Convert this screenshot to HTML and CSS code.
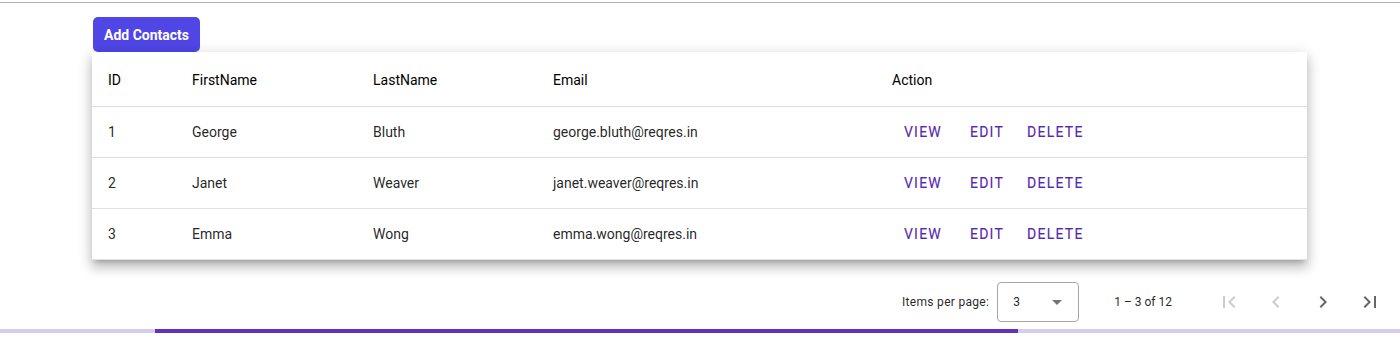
FILE: index.html
```html
<!DOCTYPE html>
<html lang="en">
<head>
    <meta charset="UTF-8">
    <meta name="viewport" content="width=device-width, initial-scale=1.0">
    <title>Contacts</title>
    <link rel="stylesheet" href="styles.css">
</head>
<body>
    <!-- Toolbar edge -->
    <div class="top-line"></div>

    <div class="page">
        <button class="add-btn">Add Contacts</button>

        <div class="table-card">
            <div class="row header-row">
                <div class="cell">ID</div>
                <div class="cell">FirstName</div>
                <div class="cell">LastName</div>
                <div class="cell">Email</div>
                <div class="cell">Action</div>
            </div>
            <div class="row">
                <div class="cell">1</div>
                <div class="cell">George</div>
                <div class="cell">Bluth</div>
                <div class="cell">george.bluth@reqres.in</div>
                <div class="cell actions">
                    <button class="text-btn">View</button>
                    <button class="text-btn">Edit</button>
                    <button class="text-btn">Delete</button>
                </div>
            </div>
            <div class="row">
                <div class="cell">2</div>
                <div class="cell">Janet</div>
                <div class="cell">Weaver</div>
                <div class="cell">janet.weaver@reqres.in</div>
                <div class="cell actions">
                    <button class="text-btn">View</button>
                    <button class="text-btn">Edit</button>
                    <button class="text-btn">Delete</button>
                </div>
            </div>
            <div class="row">
                <div class="cell">3</div>
                <div class="cell">Emma</div>
                <div class="cell">Wong</div>
                <div class="cell">emma.wong@reqres.in</div>
                <div class="cell actions">
                    <button class="text-btn">View</button>
                    <button class="text-btn">Edit</button>
                    <button class="text-btn">Delete</button>
                </div>
            </div>
        </div>

        <!-- Paginator -->
        <div class="paginator">
            <span class="page-label">Items per page:</span>
            <div class="page-select">
                <span>3</span>
                <span class="select-arrow"></span>
            </div>
            <span class="range-label">1 &ndash; 3 of 12</span>
            <div class="page-actions">
                <button class="icon-btn disabled">
                    <svg viewBox="0 0 24 24"><path d="M18.41 16.59L13.82 12l4.59-4.59L17 6l-6 6 6 6zM6 6h2v12H6z"/></svg>
                </button>
                <button class="icon-btn disabled">
                    <svg viewBox="0 0 24 24"><path d="M15.41 7.41L14 6l-6 6 6 6 1.41-1.41L10.83 12z"/></svg>
                </button>
                <button class="icon-btn">
                    <svg viewBox="0 0 24 24"><path d="M10 6L8.59 7.41 13.17 12l-4.58 4.59L10 18l6-6z"/></svg>
                </button>
                <button class="icon-btn">
                    <svg viewBox="0 0 24 24"><path d="M5.59 7.41L10.18 12l-4.59 4.59L7 18l6-6-6-6zM16 6h2v12h-2z"/></svg>
                </button>
            </div>
        </div>
    </div>

    <!-- Loading bar -->
    <div class="progress">
        <div class="progress-fill"></div>
    </div>
</body>
</html>
```

FILE: styles.css
```css
body {
    margin: 0;
    font-family: Roboto, 'Liberation Sans', sans-serif;
    background: #fff;
    color: rgba(0, 0, 0, 0.87);
}

.top-line {
    height: 2px;
    border-bottom: 1px solid #b0b0b0;
}

.page {
    padding: 14px 93px 0 92px;
}

/* Add button */
.add-btn {
    display: block;
    height: 35px;
    margin-left: 1px;
    padding: 0 11px;
    border: none;
    border-radius: 5px;
    background-color: #4f46e5;
    color: #fff;
    font-family: Roboto, 'Liberation Sans', sans-serif;
    font-size: 14px;
    font-weight: 700;
    cursor: pointer;
}

/* Table card */
.table-card {
    background: #fff;
    box-shadow: 0 5px 5px -3px rgba(0, 0, 0, 0.2), 0 8px 10px 1px rgba(0, 0, 0, 0.14), 0 3px 14px 2px rgba(0, 0, 0, 0.12);
}

.row {
    display: grid;
    grid-template-columns: 84px 181px 180px 339px 1fr;
    align-items: center;
    height: 50px;
    padding-left: 16px;
    border-bottom: 1px solid #e0e0e0;
    font-size: 14px;
}

.header-row {
    box-sizing: border-box;
    height: 55px;
    padding-top: 1px;
    color: #000;
}

.actions {
    display: flex;
    margin-left: -1px;
}

.text-btn {
    min-width: 64px;
    height: 36px;
    padding: 0 8px;
    border: none;
    background: none;
    color: #5428b3;
    font-family: Roboto, 'Liberation Sans', sans-serif;
    font-size: 14px;
    font-weight: 400;
    letter-spacing: 1.25px;
    text-transform: uppercase;
    -webkit-text-stroke: 0.12px #5428b3;
    cursor: pointer;
}

/* Paginator */
.paginator {
    display: flex;
    justify-content: flex-end;
    align-items: center;
    height: 40px;
    margin: 22px -83px 0 0;
    font-size: 12px;
    color: rgba(0, 0, 0, 0.87);
}

.page-label {
    letter-spacing: 0.3px;
}

.page-select {
    display: flex;
    align-items: center;
    justify-content: space-between;
    box-sizing: border-box;
    width: 82px;
    height: 40px;
    margin-left: 8px;
    padding: 0 16px 0 15px;
    border: 1px solid #a6a6a6;
    border-radius: 4px;
}

.select-arrow {
    width: 0;
    height: 0;
    border-left: 5px solid transparent;
    border-right: 5px solid transparent;
    border-top: 5px solid rgba(0, 0, 0, 0.54);
}

.range-label {
    margin: 0 37px 0 35px;
}

.page-actions {
    display: flex;
    gap: 7px;
}

.icon-btn {
    display: flex;
    align-items: center;
    justify-content: center;
    width: 40px;
    height: 40px;
    padding: 0;
    border: none;
    background: none;
    cursor: pointer;
}

.icon-btn svg {
    width: 24px;
    height: 24px;
    fill: rgba(0, 0, 0, 0.6);
}

.icon-btn.disabled svg {
    fill: rgba(0, 0, 0, 0.2);
}

/* Progress bar */
.progress {
    height: 4px;
    margin-top: 7px;
    background-color: #d8ccee;
}

.progress-fill {
    height: 100%;
    width: 863px;
    margin-left: 155px;
    background-color: #6232b8;
}
```
